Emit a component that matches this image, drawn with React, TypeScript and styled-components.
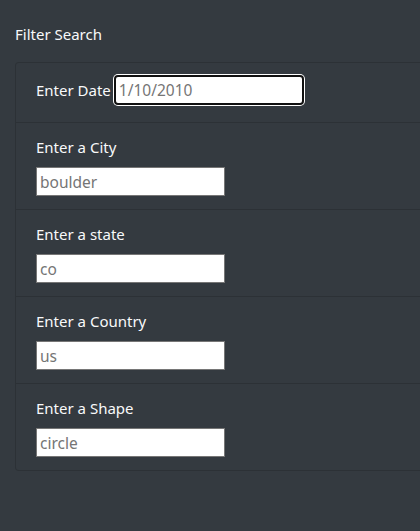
import styled, { createGlobalStyle } from 'styled-components';

const Global = createGlobalStyle`
    html, body {
        margin: 0;
        padding: 0;
        background: #343a40;
    }
    body {
        font-family: "Noto Sans", "Open Sans", sans-serif;
        color: #f8f9fa;
    }
`;

const Page = styled.div`
    min-height: 531px;
    padding: 22px 0 0 15px;
    box-sizing: border-box;
    overflow: hidden;
`;

const Heading = styled.h5`
    margin: 0 0 16px;
    font-size: 15px;
    font-weight: 400;
    line-height: 24px;
`;

const Card = styled.div`
    margin-right: -12px;
    border: 1px solid rgba(0, 0, 0, 0.15);
    border-radius: 4px;
    background: #343a40;
    box-sizing: border-box;
`;

const Item = styled.div<{ $inline?: boolean }>`
    display: flex;
    flex-direction: ${p => (p.$inline ? 'row' : 'column')};
    align-items: ${p => (p.$inline ? 'center' : 'flex-start')};
    gap: ${p => (p.$inline ? '3px' : '8px')};
    padding: ${p => (p.$inline ? '12px 20px 17px' : '12px 20px 13px')};
    border-bottom: 1px solid rgba(0, 0, 0, 0.15);

    &:last-child {
        border-bottom: none;
    }
`;

const Label = styled.label`
    font-size: 15px;
    line-height: 24px;
`;

const Field = styled.input<{ $focused?: boolean }>`
    width: ${p => (p.$focused ? '190px' : '189px')};
    height: ${p => (p.$focused ? '30px' : '29px')};
    box-sizing: border-box;
    margin: 0;
    padding: 1px 3px;
    font-family: "Noto Sans", "Open Sans", sans-serif;
    font-size: 15.5px;
    color: #222;
    background: #fff;
    border: ${p => (p.$focused ? '2px solid #111' : '1px solid #767676')};
    border-radius: ${p => (p.$focused ? '4px' : '0')};
    box-shadow: ${p => (p.$focused ? '0 0 0 1px #fff' : 'none')};
    outline: none;

    &::placeholder {
        color: #757575;
    }
`;

const fields = [
    { label: 'Enter a City', placeholder: 'boulder' },
    { label: 'Enter a state', placeholder: 'co' },
    { label: 'Enter a Country', placeholder: 'us' },
    { label: 'Enter a Shape', placeholder: 'circle' },
];

export default function App() {
    return (
        <Page>
            <Global />
            <Heading>Filter Search</Heading>
            <Card>
                <Item $inline>
                    <Label htmlFor='date'>Enter Date</Label>
                    <Field id='date' $focused placeholder='1/10/2010' />
                </Item>
                {fields.map(f => (
                    <Item key={f.label}>
                        <Label>{f.label}</Label>
                        <Field placeholder={f.placeholder} />
                    </Item>
                ))}
            </Card>
        </Page>
    );
}
